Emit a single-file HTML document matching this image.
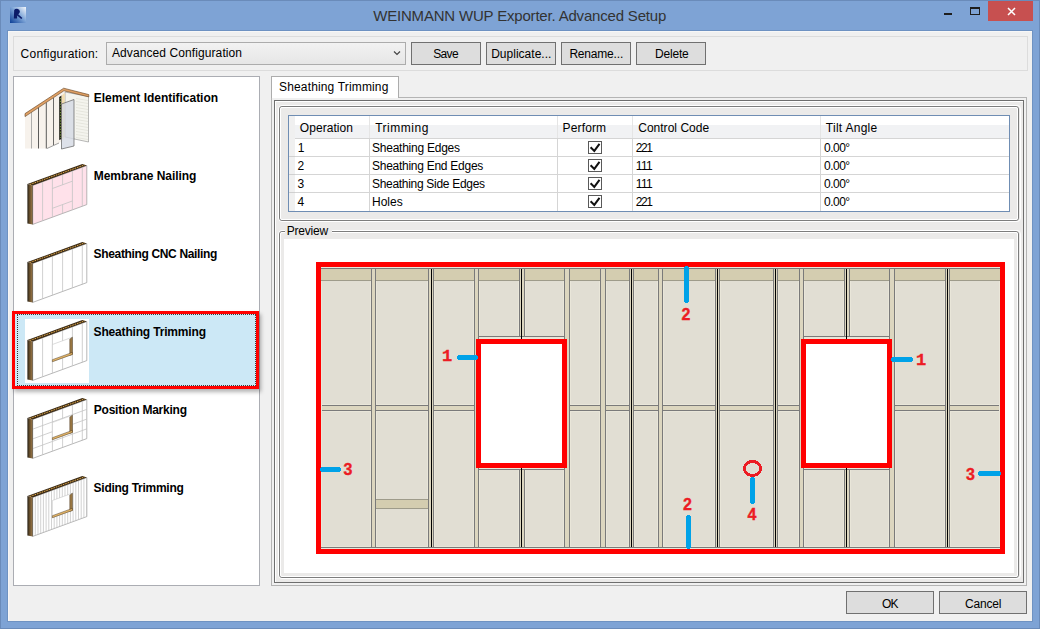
<!DOCTYPE html>
<html><head><meta charset="utf-8">
<style>
*{margin:0;padding:0;box-sizing:border-box}
html,body{width:1040px;height:629px;overflow:hidden;background:#7EA3D5;font-family:"Liberation Sans", sans-serif;font-size:11.5px;color:#000}
.a{position:absolute}
.t{position:absolute;white-space:nowrap;line-height:1}
.btn{position:absolute;background:#DDDDDD;border:1px solid #707070}
.btn span{position:absolute;left:0;right:0;text-align:center;top:5px;line-height:1;font-size:11.5px}
</style></head><body>
<div class="a" style="left:0;top:0;width:1040px;height:629px;border:1px solid #6A8BBA"></div>
<!-- app icon -->
<svg class="a" style="left:10px;top:7px" width="16" height="16" viewBox="0 0 16 16">
<defs><linearGradient id="ig" x1="0" y1="1" x2="1" y2="0"><stop offset="0" stop-color="#0B3E95"/><stop offset="0.55" stop-color="#7FA6D8"/><stop offset="1" stop-color="#F4F7FC"/></linearGradient></defs>
<rect width="16" height="16" fill="url(#ig)"/>
<path d="M3.8 11.6 L4.2 3 Q5 1.6 7.2 1.7 Q9.9 2.1 9.9 4.6 Q9.9 6.5 8.2 7.2 L12.4 10.9 L11.2 11.9 L7.2 8.4 L7 11.6 Z" fill="#0B1B68"/>
</svg>
<!-- caption buttons -->
<div class="a" style="left:944px;top:13px;width:8px;height:2px;background:#1E1E1E"></div>
<div class="a" style="left:970px;top:7px;width:10px;height:8px;border:1px solid #1E1E1E;border-top-width:2px"></div>
<div class="a" style="left:988px;top:1px;width:45px;height:20px;background:#C75050"></div>
<svg class="a" style="left:1007px;top:7px" width="9" height="9" viewBox="0 0 9 9"><path d="M1 1 L8 8 M8 1 L1 8" stroke="#fff" stroke-width="1.5"/></svg>
<!-- client area -->
<div class="a" style="left:7px;top:30px;width:1026px;height:592px;border:1px solid #6E92C2"></div>
<div class="a" style="left:8px;top:31px;width:1024px;height:590px;background:#F0F0F0;border-top:1px solid #F7F7F7;border-left:1px solid #F7F7F7"></div>
<!-- config group -->
<div class="a" style="left:13px;top:36px;width:1015px;height:35px;border:1px solid #DCDCDC"></div>
<div class="a" style="left:106px;top:42px;width:300px;height:23px;border:1px solid #ACACAC;background:linear-gradient(#F2F2F2,#E6E6E6)"></div>
<svg class="a" style="left:393px;top:50px" width="8" height="6" viewBox="0 0 8 6"><path d="M1 1.5 L4 4.5 L7 1.5" stroke="#444" stroke-width="1.2" fill="none"/></svg>
<div class="btn" style="left:411px;top:42px;width:70px;height:23px"></div>
<div class="btn" style="left:486px;top:42px;width:70px;height:23px"></div>
<div class="btn" style="left:561px;top:42px;width:70px;height:23px"></div>
<div class="btn" style="left:636px;top:42px;width:70px;height:23px"></div>
<!-- left list -->
<div class="a" style="left:13px;top:76px;width:247px;height:510px;background:#fff;border:1px solid #ABADB3"></div>
<div class="a" style="left:15px;top:314px;width:241px;height:72px;background:#CCE8F6"></div>
<div class="a" style="left:17px;top:314px;width:239px;height:72px;border:1px dotted #3C3C3C"></div>
<div class="a" style="left:25px;top:319px;width:64px;height:64px;background:#fff"></div>
<div class="a" style="left:12px;top:311px;width:247px;height:78px;border:3px solid #FF0000;box-shadow:2px 3px 4px rgba(0,0,0,0.30)"></div>
<svg class="a" style="left:0;top:0" width="270" height="629" viewBox="0 0 270 629"><defs><linearGradient id="lf" x1="0" y1="0" x2="1" y2="0"><stop offset="0" stop-color="#221C12"/><stop offset="0.35" stop-color="#5E4828"/><stop offset="0.8" stop-color="#8C6C40"/><stop offset="1" stop-color="#4A3A22"/></linearGradient></defs>
<polygon points="25,116 64,91 64,140 59,143 47,148.5 25,148.5" fill="#F7F2EC"/>
<line x1="31.5" y1="112" x2="31.5" y2="148.5" stroke="#9A9A9A" stroke-width="0.8"/>
<line x1="38.5" y1="107.5" x2="38.5" y2="148.5" stroke="#4A4A4A" stroke-width="0.9"/>
<line x1="46.3" y1="102.5" x2="46.3" y2="148.5" stroke="#4A4A4A" stroke-width="0.9"/>
<line x1="53.5" y1="98" x2="53.5" y2="145" stroke="#5A5A5A" stroke-width="0.9"/>
<line x1="47" y1="148.5" x2="59" y2="143" stroke="#777" stroke-width="0.7"/>
<polygon points="65,92 88.5,96.5 88.5,142 65,137" fill="#F4F4EE" stroke="#8A8A8A" stroke-width="0.6"/>
<g stroke="#E0E0D6" stroke-width="0.7"><line x1="76" y1="98.5" x2="88" y2="100.5"/><line x1="76" y1="101.5" x2="88" y2="103.5"/><line x1="76" y1="104.5" x2="88" y2="106.5"/><line x1="76" y1="107.5" x2="88" y2="109.5"/><line x1="76" y1="110.5" x2="88" y2="112.5"/><line x1="76" y1="113.5" x2="88" y2="115.5"/><line x1="76" y1="116.5" x2="88" y2="118.5"/><line x1="76" y1="119.5" x2="88" y2="121.5"/><line x1="76" y1="122.5" x2="88" y2="124.5"/><line x1="76" y1="125.5" x2="88" y2="127.5"/><line x1="76" y1="128.5" x2="88" y2="130.5"/><line x1="76" y1="131.5" x2="88" y2="133.5"/><line x1="76" y1="134.5" x2="88" y2="136.5"/><line x1="76" y1="137.5" x2="88" y2="139.5"/></g>
<polygon points="59.2,97 61.6,95.5 61.6,139 59.2,140" fill="#1A1A16"/>
<line x1="60.4" y1="98" x2="60.4" y2="138" stroke="#8DBA3A" stroke-width="0.8" stroke-dasharray="1.2,1.6"/>
<polygon points="61.6,95.5 64.8,93 64.8,137 61.6,139" fill="#F2DDB0"/>
<polygon points="61.5,104 74,99.5 74,146 61.5,149" fill="#D5DAE3" fill-opacity="0.8" stroke="#5E5E5E" stroke-width="0.7"/>
<polygon points="25,113.6 63.7,88.2 88.8,94.6 88.8,96.9 63.9,90.8 25,116.6" fill="#E0A064" stroke="#5E3E1E" stroke-width="0.6"/>
<polygon points="32.7,185.4 86.8,165.6 86.8,204.6 32.7,224.4" fill="#FFE1EA" stroke="#9A9A9A" stroke-width="0.7"/>
<line x1="42.6" y1="181.78" x2="42.6" y2="220.78" stroke="#C4C4C4" stroke-width="0.8"/>
<line x1="52.4" y1="178.19" x2="52.4" y2="217.19" stroke="#C4C4C4" stroke-width="0.8"/>
<line x1="62.6" y1="174.46" x2="62.6" y2="184.77" stroke="#C4C4C4" stroke-width="0.8"/>
<line x1="62.6" y1="204.57" x2="62.6" y2="213.46" stroke="#C4C4C4" stroke-width="0.8"/>
<line x1="72.4" y1="170.87" x2="72.4" y2="209.87" stroke="#C4C4C4" stroke-width="0.8"/>
<line x1="82.3" y1="167.25" x2="82.3" y2="206.25" stroke="#C4C4C4" stroke-width="0.8"/>
<line x1="52.4" y1="188.5" x2="72.4" y2="181.18" stroke="#C4C4C4" stroke-width="0.8"/>
<line x1="52.4" y1="208.3" x2="72.4" y2="200.98" stroke="#C4C4C4" stroke-width="0.8"/>
<polygon points="27.4,184.1 82.3,164.1 86.8,165.6 32.7,185.4" fill="#3A2A16"/>
<line x1="29.9" y1="184.5" x2="84.6" y2="164.9" stroke="#F2B750" stroke-width="0.9" stroke-dasharray="1.6,0.9"/>
<polygon points="27.4,184.1 32.7,185.4 32.7,224.4 27.4,223.6" fill="url(#lf)"/>
<polygon points="32.7,263.4 86.8,243.6 86.8,282.6 32.7,302.4" fill="#FFFFFF" stroke="#9A9A9A" stroke-width="0.7"/>
<line x1="42.6" y1="259.78" x2="42.6" y2="298.78" stroke="#C4C4C4" stroke-width="0.8"/>
<line x1="52.4" y1="256.19" x2="52.4" y2="295.19" stroke="#C4C4C4" stroke-width="0.8"/>
<line x1="62.6" y1="252.46" x2="62.6" y2="291.46" stroke="#C4C4C4" stroke-width="0.8"/>
<line x1="72.4" y1="248.87" x2="72.4" y2="287.87" stroke="#C4C4C4" stroke-width="0.8"/>
<line x1="82.3" y1="245.25" x2="82.3" y2="284.25" stroke="#C4C4C4" stroke-width="0.8"/>
<polygon points="27.4,262.1 82.3,242.1 86.8,243.6 32.7,263.4" fill="#3A2A16"/>
<line x1="29.9" y1="262.5" x2="84.6" y2="242.9" stroke="#F2B750" stroke-width="0.9" stroke-dasharray="1.6,0.9"/>
<polygon points="27.4,262.1 32.7,263.4 32.7,302.4 27.4,301.6" fill="url(#lf)"/>
<polygon points="32.7,341.4 86.8,321.6 86.8,360.6 32.7,380.4" fill="#FFFFFF" stroke="#9A9A9A" stroke-width="0.7"/>
<line x1="42.6" y1="337.78" x2="42.6" y2="376.78" stroke="#C4C4C4" stroke-width="0.8"/>
<line x1="52.4" y1="334.19" x2="52.4" y2="373.19" stroke="#C4C4C4" stroke-width="0.8"/>
<line x1="62.6" y1="330.46" x2="62.6" y2="369.46" stroke="#C4C4C4" stroke-width="0.8"/>
<line x1="72.4" y1="326.87" x2="72.4" y2="365.87" stroke="#C4C4C4" stroke-width="0.8"/>
<line x1="82.3" y1="323.25" x2="82.3" y2="362.25" stroke="#C4C4C4" stroke-width="0.8"/>
<polygon points="52.4,344.5 72.4,337.18 72.4,354.38 52.4,361.7" fill="#FFFFFF" stroke="#C4C4C4" stroke-width="0.6"/>
<line x1="62.6" y1="340.77" x2="62.6" y2="340.77" stroke="#C4C4C4"/>
<polygon points="69.80000000000001,339.13 72.4,337.18 72.4,354.38 69.80000000000001,355.33" fill="#9C7A45" stroke="#4A3820" stroke-width="0.5"/>
<polygon points="52.4,361.7 72.4,354.38 72.4,352.38 52.4,359.7" fill="#E8B868" stroke="#4A3820" stroke-width="0.5"/>
<polygon points="27.4,340.1 82.3,320.1 86.8,321.6 32.7,341.4" fill="#3A2A16"/>
<line x1="29.9" y1="340.5" x2="84.6" y2="320.9" stroke="#F2B750" stroke-width="0.9" stroke-dasharray="1.6,0.9"/>
<polygon points="27.4,340.1 32.7,341.4 32.7,380.4 27.4,379.6" fill="url(#lf)"/>
<polygon points="32.7,419.4 86.8,399.6 86.8,438.6 32.7,458.4" fill="#FFFFFF" stroke="#9A9A9A" stroke-width="0.7"/>
<line x1="42.6" y1="415.78" x2="42.6" y2="454.78" stroke="#C4C4C4" stroke-width="0.8"/>
<line x1="52.4" y1="412.19" x2="52.4" y2="451.19" stroke="#C4C4C4" stroke-width="0.8"/>
<line x1="62.6" y1="408.46" x2="62.6" y2="447.46" stroke="#C4C4C4" stroke-width="0.8"/>
<line x1="72.4" y1="404.87" x2="72.4" y2="443.87" stroke="#C4C4C4" stroke-width="0.8"/>
<line x1="82.3" y1="401.25" x2="82.3" y2="440.25" stroke="#C4C4C4" stroke-width="0.8"/>
<line x1="32.7" y1="429.15" x2="86.8" y2="409.35" stroke="#C4C4C4" stroke-width="0.8"/>
<line x1="32.7" y1="438.9" x2="86.8" y2="419.1" stroke="#C4C4C4" stroke-width="0.8"/>
<line x1="32.7" y1="448.65" x2="86.8" y2="428.85" stroke="#C4C4C4" stroke-width="0.8"/>
<polygon points="52.4,422.5 72.4,415.18 72.4,432.38 52.4,439.7" fill="#FFFFFF" stroke="#C4C4C4" stroke-width="0.6"/>
<polygon points="69.80000000000001,417.13 72.4,415.18 72.4,432.38 69.80000000000001,433.33" fill="#9C7A45" stroke="#4A3820" stroke-width="0.5"/>
<polygon points="52.4,439.7 72.4,432.38 72.4,430.38 52.4,437.7" fill="#E8B868" stroke="#4A3820" stroke-width="0.5"/>
<polygon points="27.4,418.1 82.3,398.1 86.8,399.6 32.7,419.4" fill="#3A2A16"/>
<line x1="29.9" y1="418.5" x2="84.6" y2="398.9" stroke="#F2B750" stroke-width="0.9" stroke-dasharray="1.6,0.9"/>
<polygon points="27.4,418.1 32.7,419.4 32.7,458.4 27.4,457.6" fill="url(#lf)"/>
<polygon points="32.7,497.4 86.8,477.6 86.8,516.6 32.7,536.4" fill="#FFFFFF" stroke="#9A9A9A" stroke-width="0.7"/>
<line x1="35.3" y1="496.45" x2="35.3" y2="535.45" stroke="#BEBEBE" stroke-width="0.7"/>
<line x1="38.0" y1="495.46" x2="38.0" y2="534.46" stroke="#BEBEBE" stroke-width="0.7"/>
<line x1="40.7" y1="494.47" x2="40.7" y2="533.47" stroke="#BEBEBE" stroke-width="0.7"/>
<line x1="43.4" y1="493.48" x2="43.4" y2="532.48" stroke="#BEBEBE" stroke-width="0.7"/>
<line x1="46.1" y1="492.5" x2="46.1" y2="531.5" stroke="#BEBEBE" stroke-width="0.7"/>
<line x1="48.8" y1="491.51" x2="48.8" y2="530.51" stroke="#BEBEBE" stroke-width="0.7"/>
<line x1="51.5" y1="490.52" x2="51.5" y2="529.52" stroke="#BEBEBE" stroke-width="0.7"/>
<line x1="54.2" y1="489.53" x2="54.2" y2="528.53" stroke="#BEBEBE" stroke-width="0.7"/>
<line x1="56.9" y1="488.54" x2="56.9" y2="527.54" stroke="#BEBEBE" stroke-width="0.7"/>
<line x1="59.6" y1="487.55" x2="59.6" y2="526.55" stroke="#BEBEBE" stroke-width="0.7"/>
<line x1="62.3" y1="486.57" x2="62.3" y2="525.57" stroke="#BEBEBE" stroke-width="0.7"/>
<line x1="65.0" y1="485.58" x2="65.0" y2="524.58" stroke="#BEBEBE" stroke-width="0.7"/>
<line x1="67.7" y1="484.59" x2="67.7" y2="523.59" stroke="#BEBEBE" stroke-width="0.7"/>
<line x1="70.4" y1="483.6" x2="70.4" y2="522.6" stroke="#BEBEBE" stroke-width="0.7"/>
<line x1="73.1" y1="482.61" x2="73.1" y2="521.61" stroke="#BEBEBE" stroke-width="0.7"/>
<line x1="75.8" y1="481.63" x2="75.8" y2="520.63" stroke="#BEBEBE" stroke-width="0.7"/>
<line x1="78.5" y1="480.64" x2="78.5" y2="519.64" stroke="#BEBEBE" stroke-width="0.7"/>
<line x1="81.2" y1="479.65" x2="81.2" y2="518.65" stroke="#BEBEBE" stroke-width="0.7"/>
<line x1="83.9" y1="478.66" x2="83.9" y2="517.66" stroke="#BEBEBE" stroke-width="0.7"/>
<line x1="86.6" y1="477.67" x2="86.6" y2="516.67" stroke="#BEBEBE" stroke-width="0.7"/>
<polygon points="52.4,500.5 72.4,493.18 72.4,510.38 52.4,517.7" fill="#FFFFFF" stroke="#C4C4C4" stroke-width="0.6"/>
<polygon points="69.80000000000001,495.13 72.4,493.18 72.4,510.38 69.80000000000001,511.33" fill="#9C7A45" stroke="#4A3820" stroke-width="0.5"/>
<polygon points="52.4,517.7 72.4,510.38 72.4,508.38 52.4,515.7" fill="#E8B868" stroke="#4A3820" stroke-width="0.5"/>
<polygon points="27.4,496.1 82.3,476.1 86.8,477.6 32.7,497.4" fill="#3A2A16"/>
<line x1="29.9" y1="496.5" x2="84.6" y2="476.9" stroke="#F2B750" stroke-width="0.9" stroke-dasharray="1.6,0.9"/>
<polygon points="27.4,496.1 32.7,497.4 32.7,536.4 27.4,535.6" fill="url(#lf)"/>
</svg>
<!-- tab -->
<div class="a" style="left:271px;top:97px;width:756px;height:489px;border:1px solid #B4B4B4;background:#F0F0F0"></div>
<div class="a" style="left:274px;top:100px;width:750px;height:483px;border:1px solid #6E6E6E;background:#EBEAE9"></div>
<div class="a" style="left:275px;top:101px;width:748px;height:481px;border:1px solid #FFFFFF;border-right:none;border-bottom:none"></div>
<div class="a" style="left:271px;top:76px;width:128px;height:22px;background:#fff;border:1px solid #ACACAC;border-bottom:none"></div>
<!-- table groupbox -->
<div class="a" style="left:278px;top:105px;width:743px;height:117px;border:1px solid #fff;border-radius:4px"></div>
<div class="a" style="left:279px;top:106px;width:740px;height:115px;border:1px solid #7D7D7D;border-radius:3px"></div>
<div class="a" style="left:280px;top:107px;width:738px;height:113px;border:1px solid #fff;border-radius:2px"></div>
<!-- grid -->
<div class="a" style="left:288px;top:115px;width:722px;height:97px;border:1px solid #6F8DB3;background:#fff"></div>
<div class="a" style="left:289px;top:116px;width:720px;height:22px;background:linear-gradient(#FFFFFF 0,#FFFFFF 41%,#F1F2F4 41%,#F1F2F4 100%)"></div>
<div class="a" style="left:289px;top:138px;width:720px;height:1px;background:#D5D5D5"></div>
<div class="a" style="left:289px;top:116px;width:6px;height:95px;background:#F0F0F0"></div>
<div class="a" style="left:369px;top:116px;width:1px;height:22px;background:#E5E5E5"></div>
<div class="a" style="left:369px;top:139px;width:1px;height:72px;background:#D5D5D5"></div>
<div class="a" style="left:557px;top:116px;width:1px;height:22px;background:#E5E5E5"></div>
<div class="a" style="left:557px;top:139px;width:1px;height:72px;background:#D5D5D5"></div>
<div class="a" style="left:632px;top:116px;width:1px;height:22px;background:#E5E5E5"></div>
<div class="a" style="left:632px;top:139px;width:1px;height:72px;background:#D5D5D5"></div>
<div class="a" style="left:820px;top:116px;width:1px;height:22px;background:#E5E5E5"></div>
<div class="a" style="left:820px;top:139px;width:1px;height:72px;background:#D5D5D5"></div>
<div class="a" style="left:295px;top:156px;width:714px;height:1px;background:#D5D5D5"></div>
<div class="a" style="left:289px;top:156px;width:6px;height:1px;background:#D0D0D0"></div>
<div class="a" style="left:295px;top:174px;width:714px;height:1px;background:#D5D5D5"></div>
<div class="a" style="left:289px;top:174px;width:6px;height:1px;background:#D0D0D0"></div>
<div class="a" style="left:295px;top:192px;width:714px;height:1px;background:#D5D5D5"></div>
<div class="a" style="left:289px;top:192px;width:6px;height:1px;background:#D0D0D0"></div>
<div class="a" style="left:588px;top:141px;width:14px;height:13px;border:1px solid #595959;background:#fff"></div>
<svg class="a" style="left:588px;top:141px" width="14" height="13" viewBox="0 0 14 13"><path d="M2.6 6.3 L6.3 9.9 L11.5 2.8" stroke="#111" stroke-width="2" fill="none"/></svg>
<div class="a" style="left:588px;top:159px;width:14px;height:13px;border:1px solid #595959;background:#fff"></div>
<svg class="a" style="left:588px;top:159px" width="14" height="13" viewBox="0 0 14 13"><path d="M2.6 6.3 L6.3 9.9 L11.5 2.8" stroke="#111" stroke-width="2" fill="none"/></svg>
<div class="a" style="left:588px;top:177px;width:14px;height:13px;border:1px solid #595959;background:#fff"></div>
<svg class="a" style="left:588px;top:177px" width="14" height="13" viewBox="0 0 14 13"><path d="M2.6 6.3 L6.3 9.9 L11.5 2.8" stroke="#111" stroke-width="2" fill="none"/></svg>
<div class="a" style="left:588px;top:195px;width:14px;height:13px;border:1px solid #595959;background:#fff"></div>
<svg class="a" style="left:588px;top:195px" width="14" height="13" viewBox="0 0 14 13"><path d="M2.6 6.3 L6.3 9.9 L11.5 2.8" stroke="#111" stroke-width="2" fill="none"/></svg>
<!-- preview groupbox -->
<div class="a" style="left:278px;top:230px;width:743px;height:349px;border:1px solid #fff;border-radius:4px"></div>
<div class="a" style="left:279px;top:231px;width:740px;height:347px;border:1px solid #7D7D7D;border-radius:3px"></div>
<div class="a" style="left:280px;top:232px;width:738px;height:345px;border:1px solid #fff;border-radius:2px"></div>
<div class="a" style="left:284px;top:239px;width:730px;height:334px;background:#fff"></div>
<div class="a" style="left:285px;top:224px;width:47px;height:14px;background:#EBEAE9"></div>
<svg class="a" style="left:0;top:0" width="1040" height="629" viewBox="0 0 1040 629" shape-rendering="crispEdges">
<rect x="321" y="267" width="679" height="282" fill="#E1DED3"/>
<rect x="321" y="267" width="679" height="1" fill="#E9E6D9"/>
<rect x="321" y="268" width="679" height="1" fill="#7A7A7A"/>
<rect x="321" y="269" width="679" height="11" fill="#D4CDB0"/>
<rect x="321" y="280" width="679" height="1" fill="#9E9B8A"/>
<rect x="321" y="281" width="1" height="268" fill="#E9E6D9"/>
<rect x="999" y="281" width="1" height="268" fill="#E9E6D9"/>
<rect x="321" y="546" width="679" height="1" fill="#E9E6D9"/>
<rect x="321" y="547" width="679" height="1" fill="#7A7A7A"/>
<rect x="321" y="548" width="679" height="1" fill="#E9E6D9"/>
<rect x="370" y="281" width="1" height="266" fill="#E9E6D9"/>
<rect x="376" y="281" width="1" height="266" fill="#E9E6D9"/>
<rect x="371" y="269" width="1" height="278" fill="#7A7A7A"/>
<rect x="372" y="269" width="3" height="278" fill="#DCD6BF"/>
<rect x="375" y="269" width="1" height="278" fill="#7A7A7A"/>
<rect x="427" y="281" width="1" height="266" fill="#E9E6D9"/>
<rect x="434" y="281" width="1" height="266" fill="#E9E6D9"/>
<rect x="428" y="269" width="1" height="278" fill="#7A7A7A"/>
<rect x="429" y="269" width="4" height="278" fill="#DCD6BF"/>
<rect x="433" y="269" width="1" height="278" fill="#7A7A7A"/>
<rect x="431" y="269" width="1" height="278" fill="#000"/>
<rect x="473" y="281" width="1" height="266" fill="#E9E6D9"/>
<rect x="479" y="281" width="1" height="266" fill="#E9E6D9"/>
<rect x="474" y="269" width="1" height="278" fill="#7A7A7A"/>
<rect x="475" y="269" width="3" height="278" fill="#DCD6BF"/>
<rect x="478" y="269" width="1" height="278" fill="#7A7A7A"/>
<rect x="518" y="281" width="1" height="55" fill="#E9E6D9"/>
<rect x="525" y="281" width="1" height="55" fill="#E9E6D9"/>
<rect x="519" y="269" width="1" height="67" fill="#7A7A7A"/>
<rect x="520" y="269" width="4" height="67" fill="#DCD6BF"/>
<rect x="524" y="269" width="1" height="67" fill="#7A7A7A"/>
<rect x="521" y="269" width="1" height="67" fill="#000"/>
<rect x="518" y="470" width="1" height="77" fill="#E9E6D9"/>
<rect x="525" y="470" width="1" height="77" fill="#E9E6D9"/>
<rect x="519" y="470" width="1" height="77" fill="#7A7A7A"/>
<rect x="520" y="470" width="4" height="77" fill="#DCD6BF"/>
<rect x="524" y="470" width="1" height="77" fill="#7A7A7A"/>
<rect x="521" y="470" width="1" height="77" fill="#000"/>
<rect x="563" y="281" width="1" height="266" fill="#E9E6D9"/>
<rect x="570" y="281" width="1" height="266" fill="#E9E6D9"/>
<rect x="564" y="269" width="1" height="278" fill="#7A7A7A"/>
<rect x="565" y="269" width="4" height="278" fill="#DCD6BF"/>
<rect x="569" y="269" width="1" height="278" fill="#7A7A7A"/>
<rect x="599" y="281" width="1" height="266" fill="#E9E6D9"/>
<rect x="606" y="281" width="1" height="266" fill="#E9E6D9"/>
<rect x="600" y="269" width="1" height="278" fill="#7A7A7A"/>
<rect x="601" y="269" width="4" height="278" fill="#DCD6BF"/>
<rect x="605" y="269" width="1" height="278" fill="#7A7A7A"/>
<rect x="628" y="281" width="1" height="266" fill="#E9E6D9"/>
<rect x="634" y="281" width="1" height="266" fill="#E9E6D9"/>
<rect x="629" y="269" width="1" height="278" fill="#7A7A7A"/>
<rect x="630" y="269" width="3" height="278" fill="#DCD6BF"/>
<rect x="633" y="269" width="1" height="278" fill="#7A7A7A"/>
<rect x="631" y="269" width="1" height="278" fill="#000"/>
<rect x="657" y="281" width="1" height="266" fill="#E9E6D9"/>
<rect x="663" y="281" width="1" height="266" fill="#E9E6D9"/>
<rect x="658" y="269" width="1" height="278" fill="#7A7A7A"/>
<rect x="659" y="269" width="3" height="278" fill="#DCD6BF"/>
<rect x="662" y="269" width="1" height="278" fill="#7A7A7A"/>
<rect x="714" y="281" width="1" height="266" fill="#E9E6D9"/>
<rect x="720" y="281" width="1" height="266" fill="#E9E6D9"/>
<rect x="715" y="269" width="1" height="278" fill="#7A7A7A"/>
<rect x="716" y="269" width="3" height="278" fill="#DCD6BF"/>
<rect x="719" y="269" width="1" height="278" fill="#7A7A7A"/>
<rect x="717" y="269" width="1" height="278" fill="#000"/>
<rect x="772" y="281" width="1" height="266" fill="#E9E6D9"/>
<rect x="778" y="281" width="1" height="266" fill="#E9E6D9"/>
<rect x="773" y="269" width="1" height="278" fill="#7A7A7A"/>
<rect x="774" y="269" width="3" height="278" fill="#DCD6BF"/>
<rect x="777" y="269" width="1" height="278" fill="#7A7A7A"/>
<rect x="775" y="269" width="1" height="278" fill="#000"/>
<rect x="798" y="281" width="1" height="266" fill="#E9E6D9"/>
<rect x="804" y="281" width="1" height="266" fill="#E9E6D9"/>
<rect x="799" y="269" width="1" height="278" fill="#7A7A7A"/>
<rect x="800" y="269" width="3" height="278" fill="#DCD6BF"/>
<rect x="803" y="269" width="1" height="278" fill="#7A7A7A"/>
<rect x="843" y="281" width="1" height="55" fill="#E9E6D9"/>
<rect x="850" y="281" width="1" height="55" fill="#E9E6D9"/>
<rect x="844" y="269" width="1" height="67" fill="#7A7A7A"/>
<rect x="845" y="269" width="4" height="67" fill="#DCD6BF"/>
<rect x="849" y="269" width="1" height="67" fill="#7A7A7A"/>
<rect x="846" y="269" width="1" height="67" fill="#000"/>
<rect x="843" y="470" width="1" height="77" fill="#E9E6D9"/>
<rect x="850" y="470" width="1" height="77" fill="#E9E6D9"/>
<rect x="844" y="470" width="1" height="77" fill="#7A7A7A"/>
<rect x="845" y="470" width="4" height="77" fill="#DCD6BF"/>
<rect x="849" y="470" width="1" height="77" fill="#7A7A7A"/>
<rect x="846" y="470" width="1" height="77" fill="#000"/>
<rect x="888" y="281" width="1" height="266" fill="#E9E6D9"/>
<rect x="895" y="281" width="1" height="266" fill="#E9E6D9"/>
<rect x="889" y="269" width="1" height="278" fill="#7A7A7A"/>
<rect x="890" y="269" width="4" height="278" fill="#DCD6BF"/>
<rect x="894" y="269" width="1" height="278" fill="#7A7A7A"/>
<rect x="944" y="281" width="1" height="266" fill="#E9E6D9"/>
<rect x="950" y="281" width="1" height="266" fill="#E9E6D9"/>
<rect x="945" y="269" width="1" height="278" fill="#7A7A7A"/>
<rect x="946" y="269" width="3" height="278" fill="#DCD6BF"/>
<rect x="949" y="269" width="1" height="278" fill="#7A7A7A"/>
<rect x="947" y="269" width="1" height="278" fill="#000"/>
<rect x="322" y="404" width="49" height="1" fill="#E9E6D9"/>
<rect x="322" y="405" width="49" height="1" fill="#7A7A7A"/>
<rect x="322" y="406" width="49" height="4" fill="#DCD6BF"/>
<rect x="322" y="410" width="49" height="1" fill="#7A7A7A"/>
<rect x="322" y="411" width="49" height="1" fill="#E9E6D9"/>
<rect x="376" y="404" width="52" height="1" fill="#E9E6D9"/>
<rect x="376" y="405" width="52" height="1" fill="#7A7A7A"/>
<rect x="376" y="406" width="52" height="4" fill="#DCD6BF"/>
<rect x="376" y="410" width="52" height="1" fill="#7A7A7A"/>
<rect x="376" y="411" width="52" height="1" fill="#E9E6D9"/>
<rect x="434" y="404" width="40" height="1" fill="#E9E6D9"/>
<rect x="434" y="405" width="40" height="1" fill="#7A7A7A"/>
<rect x="434" y="406" width="40" height="4" fill="#DCD6BF"/>
<rect x="434" y="410" width="40" height="1" fill="#7A7A7A"/>
<rect x="434" y="411" width="40" height="1" fill="#E9E6D9"/>
<rect x="570" y="404" width="30" height="1" fill="#E9E6D9"/>
<rect x="570" y="405" width="30" height="1" fill="#7A7A7A"/>
<rect x="570" y="406" width="30" height="4" fill="#DCD6BF"/>
<rect x="570" y="410" width="30" height="1" fill="#7A7A7A"/>
<rect x="570" y="411" width="30" height="1" fill="#E9E6D9"/>
<rect x="606" y="404" width="23" height="1" fill="#E9E6D9"/>
<rect x="606" y="405" width="23" height="1" fill="#7A7A7A"/>
<rect x="606" y="406" width="23" height="4" fill="#DCD6BF"/>
<rect x="606" y="410" width="23" height="1" fill="#7A7A7A"/>
<rect x="606" y="411" width="23" height="1" fill="#E9E6D9"/>
<rect x="634" y="404" width="24" height="1" fill="#E9E6D9"/>
<rect x="634" y="405" width="24" height="1" fill="#7A7A7A"/>
<rect x="634" y="406" width="24" height="4" fill="#DCD6BF"/>
<rect x="634" y="410" width="24" height="1" fill="#7A7A7A"/>
<rect x="634" y="411" width="24" height="1" fill="#E9E6D9"/>
<rect x="663" y="404" width="52" height="1" fill="#E9E6D9"/>
<rect x="663" y="405" width="52" height="1" fill="#7A7A7A"/>
<rect x="663" y="406" width="52" height="4" fill="#DCD6BF"/>
<rect x="663" y="410" width="52" height="1" fill="#7A7A7A"/>
<rect x="663" y="411" width="52" height="1" fill="#E9E6D9"/>
<rect x="720" y="404" width="53" height="1" fill="#E9E6D9"/>
<rect x="720" y="405" width="53" height="1" fill="#7A7A7A"/>
<rect x="720" y="406" width="53" height="4" fill="#DCD6BF"/>
<rect x="720" y="410" width="53" height="1" fill="#7A7A7A"/>
<rect x="720" y="411" width="53" height="1" fill="#E9E6D9"/>
<rect x="778" y="404" width="21" height="1" fill="#E9E6D9"/>
<rect x="778" y="405" width="21" height="1" fill="#7A7A7A"/>
<rect x="778" y="406" width="21" height="4" fill="#DCD6BF"/>
<rect x="778" y="410" width="21" height="1" fill="#7A7A7A"/>
<rect x="778" y="411" width="21" height="1" fill="#E9E6D9"/>
<rect x="895" y="404" width="50" height="1" fill="#E9E6D9"/>
<rect x="895" y="405" width="50" height="1" fill="#7A7A7A"/>
<rect x="895" y="406" width="50" height="4" fill="#DCD6BF"/>
<rect x="895" y="410" width="50" height="1" fill="#7A7A7A"/>
<rect x="895" y="411" width="50" height="1" fill="#E9E6D9"/>
<rect x="950" y="404" width="49" height="1" fill="#E9E6D9"/>
<rect x="950" y="405" width="49" height="1" fill="#7A7A7A"/>
<rect x="950" y="406" width="49" height="4" fill="#DCD6BF"/>
<rect x="950" y="410" width="49" height="1" fill="#7A7A7A"/>
<rect x="950" y="411" width="49" height="1" fill="#E9E6D9"/>
<rect x="376" y="499" width="52" height="1" fill="#9E9B8A"/>
<rect x="376" y="500" width="52" height="8" fill="#D4CDB0"/>
<rect x="376" y="508" width="52" height="1" fill="#9E9B8A"/>
<rect x="479" y="336" width="85" height="1" fill="#7A7A7A"/>
<rect x="479" y="337" width="85" height="2" fill="#E9E6D9"/>
<rect x="479" y="468" width="85" height="1" fill="#E9E6D9"/>
<rect x="479" y="469" width="85" height="1" fill="#7A7A7A"/>
<rect x="521" y="336" width="1" height="3" fill="#000"/>
<rect x="521" y="468" width="1" height="2" fill="#000"/>
<rect x="804" y="336" width="85" height="1" fill="#7A7A7A"/>
<rect x="804" y="337" width="85" height="2" fill="#E9E6D9"/>
<rect x="804" y="468" width="85" height="1" fill="#E9E6D9"/>
<rect x="804" y="469" width="85" height="1" fill="#7A7A7A"/>
<rect x="846" y="336" width="1" height="3" fill="#000"/>
<rect x="846" y="468" width="1" height="2" fill="#000"/>
<rect x="476" y="339" width="91" height="129" fill="#FF0000"/>
<rect x="481" y="344" width="81" height="119" fill="#FFFFFF"/>
<rect x="801" y="339" width="91" height="129" fill="#FF0000"/>
<rect x="806" y="344" width="81" height="119" fill="#FFFFFF"/>
<rect x="316" y="262" width="689" height="5" fill="#FF0000"/>
<rect x="316" y="549" width="689" height="5" fill="#FF0000"/>
<rect x="316" y="262" width="5" height="292" fill="#FF0000"/>
<rect x="1000" y="262" width="5" height="292" fill="#FF0000"/>
<line x1="459.5" y1="357.5" x2="475.5" y2="357.5" stroke="#00A2E8" stroke-width="5" stroke-linecap="round"/>
<line x1="893.5" y1="359.5" x2="910.5" y2="359.5" stroke="#00A2E8" stroke-width="5" stroke-linecap="round"/>
<line x1="686.5" y1="268.5" x2="686.5" y2="300.5" stroke="#00A2E8" stroke-width="5" stroke-linecap="round"/>
<line x1="688.5" y1="517.5" x2="688.5" y2="546.5" stroke="#00A2E8" stroke-width="5" stroke-linecap="round"/>
<line x1="322.5" y1="469.5" x2="338.5" y2="469.5" stroke="#00A2E8" stroke-width="5" stroke-linecap="round"/>
<line x1="980.5" y1="473.5" x2="998.5" y2="473.5" stroke="#00A2E8" stroke-width="5" stroke-linecap="round"/>
<line x1="752.5" y1="479.5" x2="752.5" y2="501.5" stroke="#00A2E8" stroke-width="5" stroke-linecap="round"/>
<ellipse cx="752.5" cy="468.5" rx="8" ry="7" fill="none" stroke="#EC1C24" stroke-width="3"/>
<text x="447.0" y="361" text-anchor="middle" font-family="Liberation Mono" font-weight="bold" font-size="17" fill="#EC1C24" stroke="#EC1C24" stroke-width="0.35" shape-rendering="auto">1</text>
<text x="921.0" y="365" text-anchor="middle" font-family="Liberation Mono" font-weight="bold" font-size="17" fill="#EC1C24" stroke="#EC1C24" stroke-width="0.35" shape-rendering="auto">1</text>
<text x="686.0" y="320" text-anchor="middle" font-family="Liberation Sans" font-weight="bold" font-size="16" fill="#EC1C24" stroke="#EC1C24" stroke-width="0.35" shape-rendering="auto">2</text>
<text x="687.5" y="510" text-anchor="middle" font-family="Liberation Sans" font-weight="bold" font-size="16" fill="#EC1C24" stroke="#EC1C24" stroke-width="0.35" shape-rendering="auto">2</text>
<text x="348.0" y="475" text-anchor="middle" font-family="Liberation Sans" font-weight="bold" font-size="16" fill="#EC1C24" stroke="#EC1C24" stroke-width="0.35" shape-rendering="auto">3</text>
<text x="970.5" y="480" text-anchor="middle" font-family="Liberation Sans" font-weight="bold" font-size="16" fill="#EC1C24" stroke="#EC1C24" stroke-width="0.35" shape-rendering="auto">3</text>
<text x="752.0" y="520" text-anchor="middle" font-family="Liberation Sans" font-weight="bold" font-size="16" fill="#EC1C24" stroke="#EC1C24" stroke-width="0.35" shape-rendering="auto">4</text>
</svg>
<!-- OK Cancel -->
<div class="btn" style="left:846px;top:591px;width:88px;height:23px"></div>
<div class="btn" style="left:939px;top:591px;width:88px;height:23px"></div>
<div class="t" id="title" style="left:373.20px;top:7.55px;font-size:15px;font-weight:normal;color:#333;letter-spacing:-0.187px">WEINMANN WUP Exporter. Advanced Setup</div>
<div class="t" id="cfg" style="left:20.60px;top:48.24px;font-size:12px;font-weight:normal;color:#000;letter-spacing:0.222px">Configuration:</div>
<div class="t" id="combo" style="left:112.00px;top:47.24px;font-size:12px;font-weight:normal;color:#000;letter-spacing:0.091px">Advanced Configuration</div>
<div class="t" id="save" style="left:433.20px;top:48.24px;font-size:12px;font-weight:normal;color:#000;letter-spacing:-0.640px">Save</div>
<div class="t" id="dup" style="left:491.20px;top:48.24px;font-size:12px;font-weight:normal;color:#000;letter-spacing:0.015px">Duplicate...</div>
<div class="t" id="ren" style="left:569.40px;top:48.24px;font-size:12px;font-weight:normal;color:#000;letter-spacing:-0.190px">Rename...</div>
<div class="t" id="del" style="left:655.00px;top:48.24px;font-size:12px;font-weight:normal;color:#000;letter-spacing:-0.192px">Delete</div>
<div class="t" id="tab" style="left:279.00px;top:81.24px;font-size:12px;font-weight:normal;color:#000;letter-spacing:0.155px">Sheathing Trimming</div>
<div class="t" id="li0" style="left:93.80px;top:91.64px;font-size:12px;font-weight:bold;color:#000;letter-spacing:-0.019px">Element Identification</div>
<div class="t" id="li1" style="left:93.80px;top:169.64px;font-size:12px;font-weight:bold;color:#000;letter-spacing:-0.053px">Membrane Nailing</div>
<div class="t" id="li2" style="left:93.60px;top:248.04px;font-size:12px;font-weight:bold;color:#000;letter-spacing:-0.348px">Sheathing CNC Nailing</div>
<div class="t" id="li3" style="left:93.60px;top:326.04px;font-size:12px;font-weight:bold;color:#000;letter-spacing:-0.174px">Sheathing Trimming</div>
<div class="t" id="li4" style="left:93.80px;top:403.64px;font-size:12px;font-weight:bold;color:#000;letter-spacing:-0.229px">Position Marking</div>
<div class="t" id="li5" style="left:93.60px;top:482.04px;font-size:12px;font-weight:bold;color:#000;letter-spacing:-0.269px">Siding Trimming</div>
<div class="t" id="hop" style="left:299.80px;top:122.24px;font-size:12px;font-weight:normal;color:#000;letter-spacing:0.050px">Operation</div>
<div class="t" id="htr" style="left:375.20px;top:122.24px;font-size:12px;font-weight:normal;color:#000;letter-spacing:0.514px">Trimming</div>
<div class="t" id="hpf" style="left:562.60px;top:122.24px;font-size:12px;font-weight:normal;color:#000;letter-spacing:0.133px">Perform</div>
<div class="t" id="hcc" style="left:638.20px;top:122.24px;font-size:12px;font-weight:normal;color:#000;letter-spacing:0.022px">Control Code</div>
<div class="t" id="hta" style="left:825.80px;top:122.24px;font-size:12px;font-weight:normal;color:#000;letter-spacing:0.276px">Tilt Angle</div>
<div class="t" id="r0a" style="left:297.80px;top:142.44px;font-size:12px;font-weight:normal;color:#000;letter-spacing:0.000px">1</div>
<div class="t" id="r1a" style="left:297.40px;top:160.44px;font-size:12px;font-weight:normal;color:#000;letter-spacing:0.000px">2</div>
<div class="t" id="r2a" style="left:297.40px;top:178.44px;font-size:12px;font-weight:normal;color:#000;letter-spacing:0.000px">3</div>
<div class="t" id="r3a" style="left:297.40px;top:196.44px;font-size:12px;font-weight:normal;color:#000;letter-spacing:0.000px">4</div>
<div class="t" id="r0b" style="left:372.00px;top:142.44px;font-size:12px;font-weight:normal;color:#000;letter-spacing:-0.240px">Sheathing Edges</div>
<div class="t" id="r1b" style="left:372.00px;top:160.44px;font-size:12px;font-weight:normal;color:#000;letter-spacing:-0.267px">Sheathing End Edges</div>
<div class="t" id="r2b" style="left:372.00px;top:178.44px;font-size:12px;font-weight:normal;color:#000;letter-spacing:-0.303px">Sheathing Side Edges</div>
<div class="t" id="r3b" style="left:372.00px;top:196.44px;font-size:12px;font-weight:normal;color:#000;letter-spacing:0.000px">Holes</div>
<div class="t" id="r0c" style="left:635.80px;top:142.24px;font-size:12px;font-weight:normal;color:#000;letter-spacing:-1.480px">221</div>
<div class="t" id="r1c" style="left:635.80px;top:160.24px;font-size:12px;font-weight:normal;color:#000;letter-spacing:-0.640px">111</div>
<div class="t" id="r2c" style="left:635.80px;top:178.24px;font-size:12px;font-weight:normal;color:#000;letter-spacing:-0.640px">111</div>
<div class="t" id="r3c" style="left:635.80px;top:196.24px;font-size:12px;font-weight:normal;color:#000;letter-spacing:-1.480px">221</div>
<div class="t" id="r0d" style="left:824.00px;top:142.24px;font-size:12px;font-weight:normal;color:#000;letter-spacing:-0.500px">0.00°</div>
<div class="t" id="r1d" style="left:824.00px;top:160.24px;font-size:12px;font-weight:normal;color:#000;letter-spacing:-0.500px">0.00°</div>
<div class="t" id="r2d" style="left:824.00px;top:178.24px;font-size:12px;font-weight:normal;color:#000;letter-spacing:-0.500px">0.00°</div>
<div class="t" id="r3d" style="left:824.00px;top:196.24px;font-size:12px;font-weight:normal;color:#000;letter-spacing:-0.500px">0.00°</div>
<div class="t" id="prev" style="left:286.80px;top:225.04px;font-size:12px;font-weight:normal;color:#000;letter-spacing:-0.213px">Preview</div>
<div class="t" id="ok" style="left:882.00px;top:598.04px;font-size:12px;font-weight:normal;color:#000;letter-spacing:-0.880px">OK</div>
<div class="t" id="cancel" style="left:965.00px;top:598.04px;font-size:12px;font-weight:normal;color:#000;letter-spacing:-0.208px">Cancel</div>
</body></html>
